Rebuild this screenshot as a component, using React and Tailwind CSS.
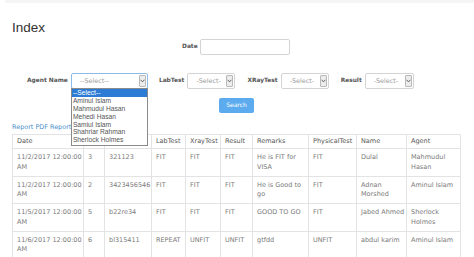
import React from 'react';

const agents = ['Aminul Islam', 'Mahmudul Hasan', 'Mehedi Hasan', 'Samiul Islam', 'Shahriar Rahman', 'Sherlock Holmes'];

const cols = [
  { key: 'date', label: 'Date', w: 71 },
  { key: 'id', label: 'ID', w: 21 },
  { key: 'pass', label: 'Passport', w: 47 },
  { key: 'lab', label: 'LabTest', w: 34 },
  { key: 'xray', label: 'XrayTest', w: 35 },
  { key: 'result', label: 'Result', w: 32 },
  { key: 'remarks', label: 'Remarks', w: 56 },
  { key: 'phys', label: 'PhysicalTest', w: 48 },
  { key: 'name', label: 'Name', w: 50 },
  { key: 'agent', label: 'Agent', w: 54 },
];

const rows = [
  { date: ['11/2/2017 12:00:00', 'AM'], id: '3', pass: '321123', lab: 'FIT', xray: 'FIT', result: 'FIT', remarks: ['He is FIT for', 'VISA'], phys: 'FIT', name: 'Dulal', agent: ['Mahmudul', 'Hasan'] },
  { date: ['11/2/2017 12:00:00', 'AM'], id: '2', pass: '3423456546', lab: 'FIT', xray: 'FIT', result: 'FIT', remarks: ['He is Good to', 'go'], phys: 'FIT', name: ['Adnan', 'Morshed'], agent: 'Aminul Islam' },
  { date: ['11/5/2017 12:00:00', 'AM'], id: '5', pass: 'b22re34', lab: 'FIT', xray: 'FIT', result: 'FIT', remarks: 'GOOD TO GO', phys: 'FIT', name: 'Jabed Ahmed', agent: ['Sherlock', 'Holmes'] },
  { date: ['11/6/2017 12:00:00', 'AM'], id: '6', pass: 'bl315411', lab: 'REPEAT', xray: 'UNFIT', result: 'UNFIT', remarks: 'gtfdd', phys: 'UNFIT', name: 'abdul karim', agent: 'Aminul Islam' },
];

function Chevron() {
  return (
    <svg width="5" height="4" viewBox="0 0 5 4" className="block">
      <path d="M0.6 0.8 L2.5 2.9 L4.4 0.8" fill="none" stroke="#555" strokeWidth="0.9" />
    </svg>
  );
}

function Select({ width, text, focused, children }) {
  return (
    <div
      className={`relative flex h-[16px] items-stretch rounded-[2px] border bg-white ${focused ? 'border-[#8dbbe8]' : 'border-[#d4d4d4]'}`}
      style={{ width }}
    >
      <div className="flex flex-1 items-center pl-[8px] text-[6.4px] text-[#9a9a9a]">{text}</div>
      <div className="my-[1px] mr-[1px] flex w-[7px] items-center justify-center rounded-[1px] border border-[#b9b9b9] bg-[#ececec]">
        <Chevron />
      </div>
      {children}
    </div>
  );
}

function Label({ className = '', children }) {
  return <span className={`text-[5.9px] font-bold leading-none text-[#555] ${className}`}>{children}</span>;
}

function Cell({ value }) {
  const lines = Array.isArray(value) ? value : [value];
  return (
    <td className="overflow-hidden whitespace-nowrap border border-[#e3e3e3] px-[4px] py-[4px] align-top">
      {lines.map((l, i) => (
        <div key={i}>{l}</div>
      ))}
    </td>
  );
}

export default function App() {
  return (
    <div className="min-h-screen w-[474px] overflow-hidden bg-white font-['DejaVu_Sans',sans-serif]">
      <div className="ml-[5px] h-[3px] bg-[#f5f5f5]" />
      <div className="px-[12px]">
        <h2 className="mt-[17.6px] font-['Liberation_Sans',sans-serif] text-[13.5px] leading-none text-[#333]">Index</h2>

        <div className="ml-[170px] mt-[4.9px] flex h-[16px] items-center gap-[2px] text-[6px] leading-none">
          <Label>Date</Label>
          <div className="h-[16px] w-[90px] rounded-[2px] border border-[#d4d4d4] bg-white" />
        </div>

        <div className="relative z-10 ml-[15px] mt-[18px] flex h-[16px] items-center text-[6px] leading-none">
          <Label>Agent Name</Label>
          <div className="ml-[3px]">
            <Select width={77} text="--Select--" focused>
              <div className="absolute left-[-1px] top-full w-[77px] border border-[#8a8a8a] bg-white pb-[1px] font-['Liberation_Sans',sans-serif] text-[6.7px] text-[#555]">
                <div className="h-[7.9px] bg-[#2c7cd6] pl-[1px] leading-[7.9px] text-white">--Select--</div>
                {agents.map((a) => (
                  <div key={a} className="h-[7.9px] pl-[1px] leading-[7.9px]">{a}</div>
                ))}
              </div>
            </Select>
          </div>
          <Label className="ml-[11px]">LabTest</Label>
          <div className="ml-[3px]"><Select width={48} text="-Select-" /></div>
          <Label className="ml-[12px]">XRayTest</Label>
          <div className="ml-[3px]"><Select width={48} text="-Select-" /></div>
          <Label className="ml-[12px]">Result</Label>
          <div className="ml-[3px]"><Select width={49} text="-Select-" /></div>
        </div>

        <button className="ml-[207px] mt-[9px] flex h-[15px] w-[35px] items-center justify-center rounded-[2px] bg-[#5cabee] text-[6px] leading-none text-white">
          Search
        </button>

        <div className="mt-[10px] h-[8px] text-[6.45px] leading-[8px] text-[#4a8fcc]">Report PDF Report</div>

        <table className="mt-[3px] w-[448px] table-fixed border-collapse border border-[#dcdcdc] text-[6.5px] leading-[9.3px] text-[#7a7a7a]">
          <colgroup>
            {cols.map((c) => (
              <col key={c.key} style={{ width: c.w }} />
            ))}
          </colgroup>
          <thead>
            <tr className="h-[14px]">
              {cols.map((c) => (
                <th key={c.key} className="whitespace-nowrap border border-[#e3e3e3] px-[4px] py-[2px] text-left font-normal text-[#555]">
                  {c.label}
                </th>
              ))}
            </tr>
          </thead>
          <tbody>
            {rows.map((r, i) => (
              <tr key={i}>
                {cols.map((c) => (
                  <Cell key={c.key} value={r[c.key]} />
                ))}
              </tr>
            ))}
          </tbody>
        </table>
      </div>
    </div>
  );
}
